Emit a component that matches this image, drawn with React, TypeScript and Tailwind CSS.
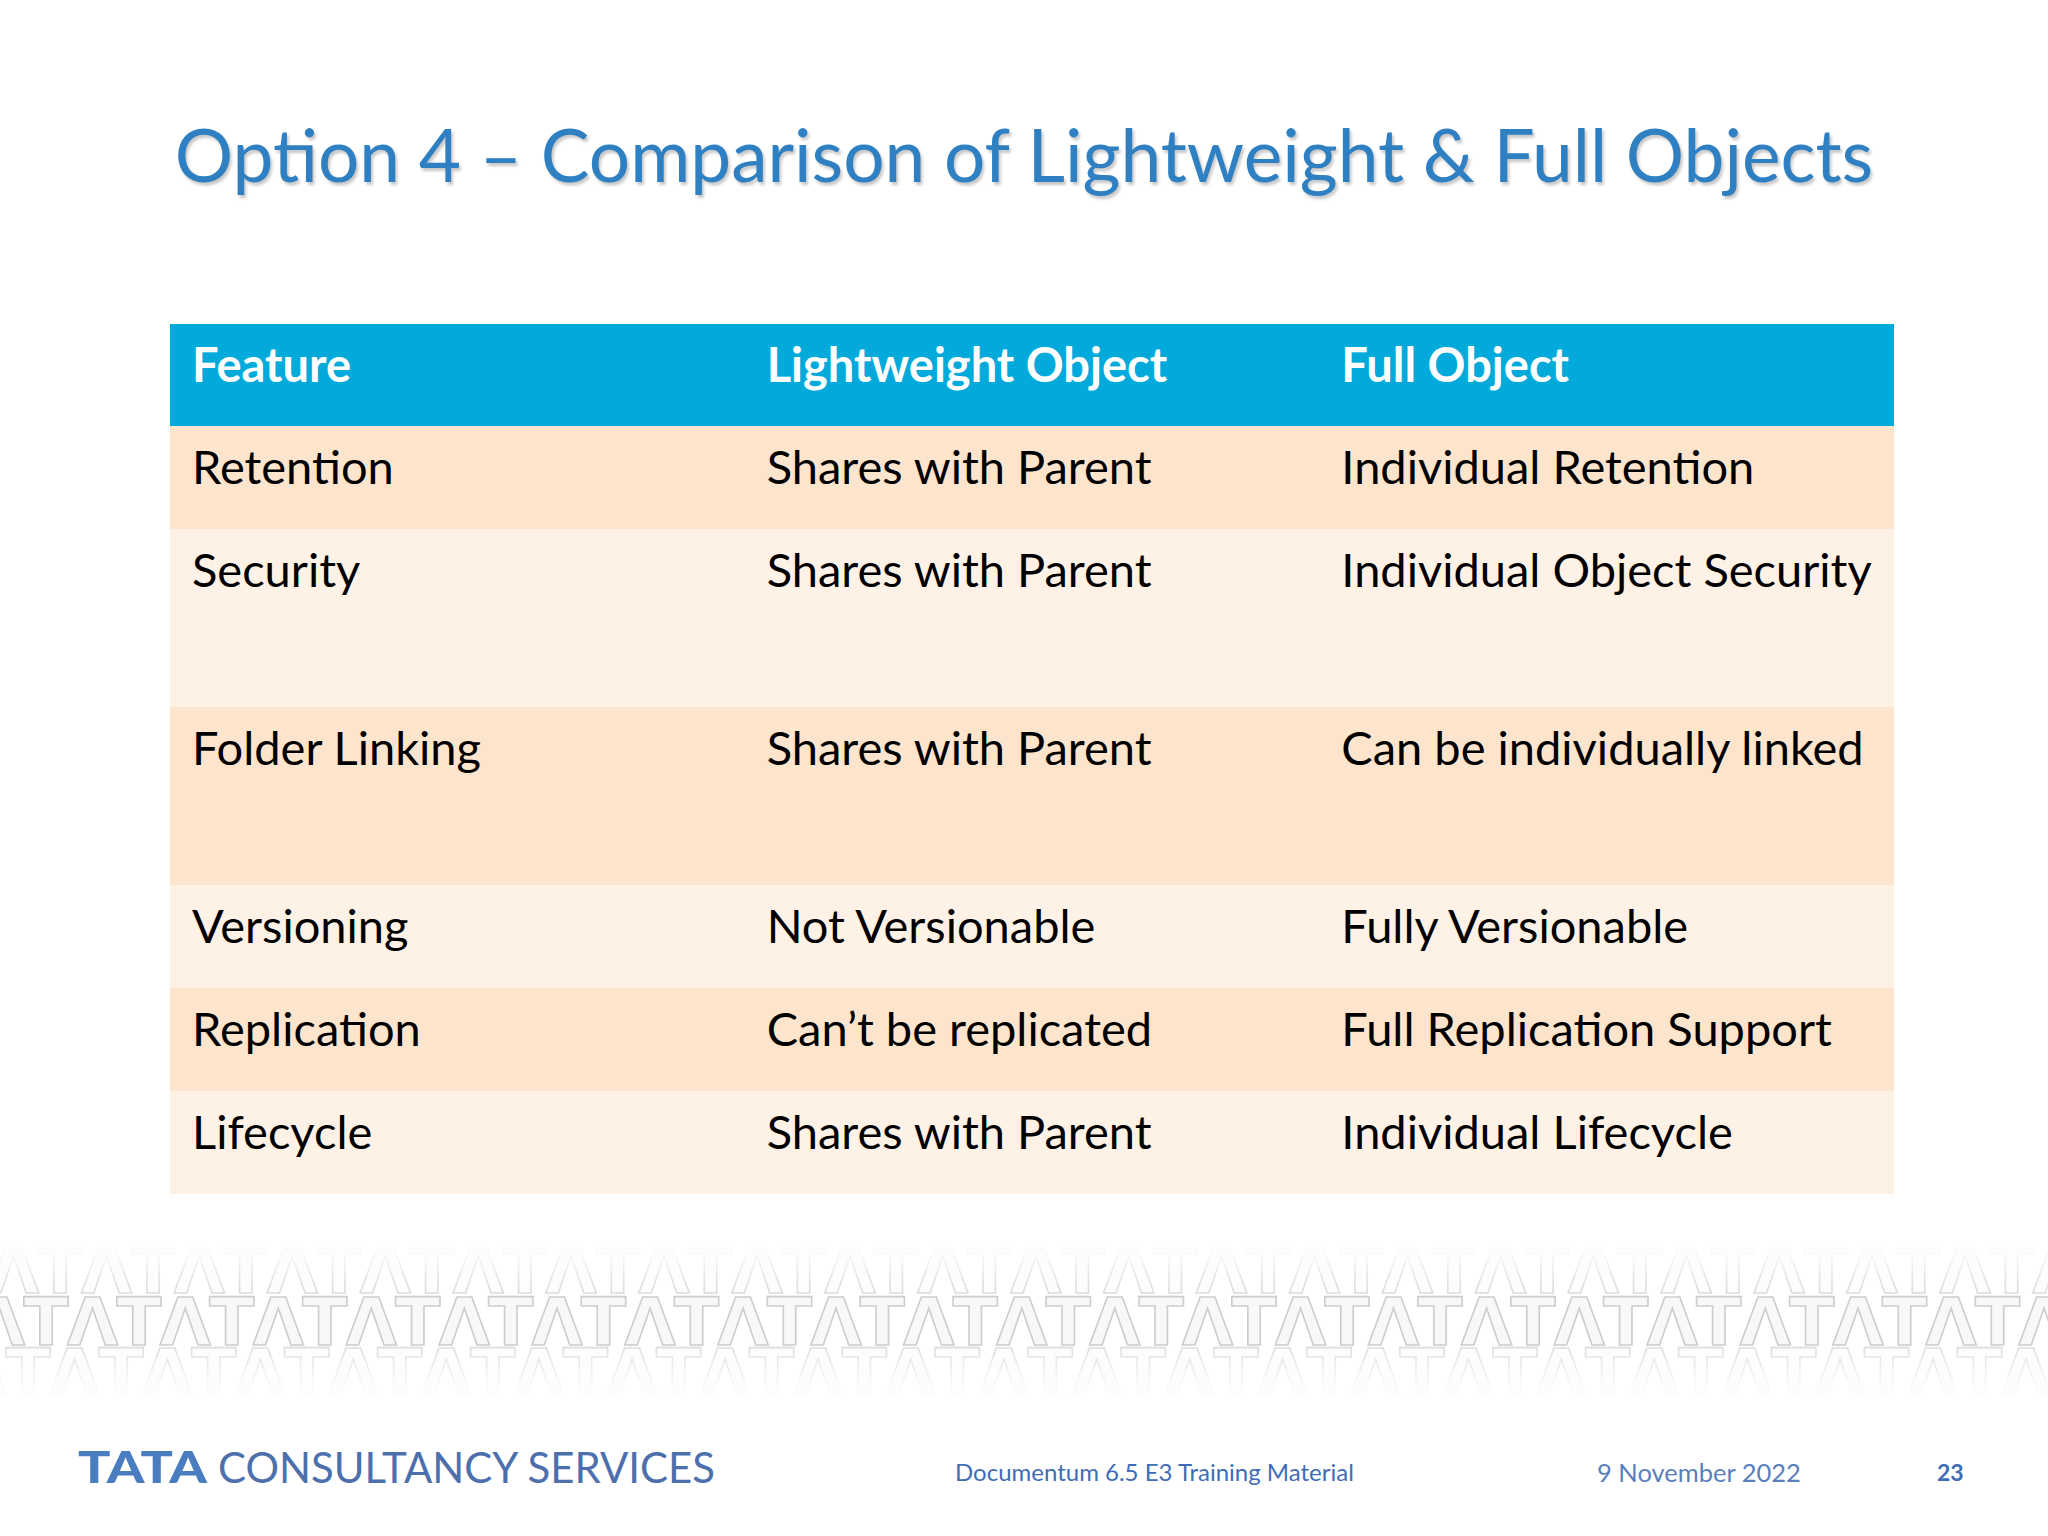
import React from "react";

const rows: { a: string; b: string; c: string; tall?: boolean; dark: boolean }[] = [
  { a: "Retention", b: "Shares with Parent", c: "Individual Retention", dark: true },
  { a: "Security", b: "Shares with Parent", c: "Individual Object Security", tall: true, dark: false },
  { a: "Folder Linking", b: "Shares with Parent", c: "Can be individually linked", tall: true, dark: true },
  { a: "Versioning", b: "Not Versionable", c: "Fully Versionable", dark: false },
  { a: "Replication", b: "Can\u2019t be replicated", c: "Full Replication Support", dark: true },
  { a: "Lifecycle", b: "Shares with Parent", c: "Individual Lifecycle", dark: false },
];

const PITCH = 46.5;
const COUNT = 46;
const PATTERN = Array.from({ length: COUNT }, (_, i) => (i % 2 === 0 ? "\u039B" : "T")).join("");

function WatermarkRow({ y, offset, stroke, fill }: { y: number; offset: number; stroke: string; fill: string }) {
  return (
    <text
      x={offset}
      y={y}
      fontFamily="'DejaVu Sans', sans-serif"
      fontWeight={700}
      fontSize={66}
      fill={fill}
      stroke={stroke}
      strokeWidth={1.6}
      textLength={COUNT * PITCH}
      lengthAdjust="spacing"
    >
      {PATTERN}
    </text>
  );
}

function Watermark() {
  return (
    <svg width="2048" height="153" viewBox="0 0 2048 153" className="block">
      <defs>
        <linearGradient id="gTop" x1="0" y1="0" x2="0" y2="48" gradientUnits="userSpaceOnUse">
          <stop offset="0" stopColor="#e2e2e2" stopOpacity="0" />
          <stop offset="0.6" stopColor="#dcdcdc" stopOpacity="0.7" />
          <stop offset="1" stopColor="#d6d6d6" stopOpacity="0.9" />
        </linearGradient>
        <linearGradient id="gBot" x1="0" y1="100" x2="0" y2="150" gradientUnits="userSpaceOnUse">
          <stop offset="0" stopColor="#dadada" stopOpacity="0.9" />
          <stop offset="0.5" stopColor="#e2e2e2" stopOpacity="0.45" />
          <stop offset="1" stopColor="#eeeeee" stopOpacity="0" />
        </linearGradient>
      </defs>
      <WatermarkRow y={46} offset={-12} stroke="url(#gTop)" fill="#fdfdfc" />
      <WatermarkRow y={149} offset={-44} stroke="url(#gBot)" fill="#fdfdfc" />
      <WatermarkRow y={98} offset={-26} stroke="#cdcdcd" fill="#f8f8f6" />
    </svg>
  );
}

function Logo() {
  return (
    <svg width="640" height="64" viewBox="0 0 640 64" className="block">
      <text
        x="0"
        y="43"
        fontFamily="Lato, 'Liberation Sans', sans-serif"
        fontWeight={900}
        fontSize={43}
        fill="#4a7dc0"
        textLength={129}
        lengthAdjust="spacingAndGlyphs"
      >
        TATA
      </text>
      <text
        x="140"
        y="43"
        fontFamily="Lato, 'Liberation Sans', sans-serif"
        fontWeight={400}
        fontSize={43}
        fill="#4d70ad"
        textLength={497}
        lengthAdjust="spacingAndGlyphs"
      >
        CONSULTANCY SERVICES
      </text>
    </svg>
  );
}

export default function App() {
  return (
    <div className="w-[2048px] h-[1536px] bg-white flex flex-col overflow-hidden font-['Lato','Liberation_Sans',sans-serif]">
      <h1 className="mt-[111px] h-[86px] text-center text-[73px] leading-[86px] font-normal text-[#2f80c2] [text-shadow:2px_3px_3px_rgba(0,0,0,0.22)] whitespace-nowrap">
        Option 4 – Comparison of Lightweight &amp; Full Objects
      </h1>

      <div className="mt-[127px] ml-[170px] w-[1724px] flex flex-col">
        <div className="grid grid-cols-3 h-[102px] bg-[#01aadb] text-white font-bold text-[47px] leading-[56px]">
          <div className="pl-[22px] pt-[12px]">Feature</div>
          <div className="pl-[22px] pt-[12px]">Lightweight Object</div>
          <div className="pl-[22px] pt-[12px]">Full Object</div>
        </div>
        {rows.map((r, i) => (
          <div
            key={i}
            className={`grid grid-cols-3 text-black text-[47px] leading-[56px] ${r.tall ? "h-[178px]" : "h-[103px]"} ${
              r.dark ? "bg-[#fde4cd]" : "bg-[#fef2e7]"
            }`}
          >
            <div className="pl-[22px] pt-[12px] whitespace-nowrap">{r.a}</div>
            <div className="pl-[22px] pt-[12px] whitespace-nowrap">{r.b}</div>
            <div className="pl-[22px] pt-[12px] whitespace-nowrap">{r.c}</div>
          </div>
        ))}
      </div>

      <div className="mt-[53px]">
        <Watermark />
      </div>

      <div className="mt-[40px] h-[64px] flex items-center pl-[78px]">
        <Logo />
        <div className="ml-[237px] w-[642px] text-[24px] text-[#3f6db5]">Documentum 6.5 E3 Training Material</div>
        <div className="w-[340px] text-[25.5px] text-[#5a7fbc]">9 November 2022</div>
        <div className="text-[23px] font-bold text-[#3f6db5]">23</div>
      </div>
    </div>
  );
}
